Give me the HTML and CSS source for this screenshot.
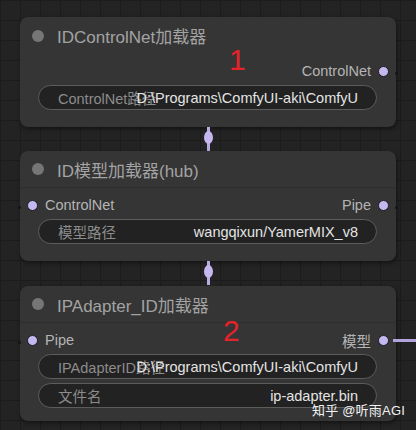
FILE: index.html
```html
<!DOCTYPE html>
<html lang="zh">
<head>
    <meta charset="UTF-8">
    <title>IPAdapter ID nodes</title>
    <link rel="stylesheet" href="styles.css">
</head>
<body>
    <div class="canvas">
        <div class="graph">
            <!-- node 1 -->
            <div class="node">
                <div class="node-title"><span class="node-dot"></span>IDControlNet加载器</div>
                <div class="node-body">
                    <div class="slot-row">
                        <span></span>
                        <span class="slot out">ControlNet<i class="pin"></i></span>
                    </div>
                    <div class="widget">
                        <span class="w-label">ControlNet路径</span>
                        <span class="w-value">D:\Programs\ComfyUI-aki\ComfyU</span>
                    </div>
                </div>
            </div>

            <div class="link"><i class="link-dot"></i></div>

            <!-- node 2 -->
            <div class="node">
                <div class="node-title sep"><span class="node-dot"></span>ID模型加载器(hub)</div>
                <div class="node-body">
                    <div class="slot-row">
                        <span class="slot in"><i class="pin"></i>ControlNet</span>
                        <span class="slot out">Pipe<i class="pin"></i></span>
                    </div>
                    <div class="widget">
                        <span class="w-label">模型路径</span>
                        <span class="w-value">wangqixun/YamerMIX_v8</span>
                    </div>
                </div>
            </div>

            <div class="link"><i class="link-dot"></i></div>

            <!-- node 3 -->
            <div class="node last">
                <div class="node-title sep"><span class="node-dot"></span>IPAdapter_ID加载器</div>
                <div class="node-body">
                    <div class="slot-row">
                        <span class="slot in"><i class="pin"></i>Pipe</span>
                        <span class="slot out linked">模型<i class="pin"></i></span>
                    </div>
                    <div class="widget">
                        <span class="w-label">IPAdapterID路径</span>
                        <span class="w-value">D:\Programs\ComfyUI-aki\ComfyU</span>
                    </div>
                    <div class="widget">
                        <span class="w-label">文件名</span>
                        <span class="w-value">ip-adapter.bin</span>
                    </div>
                </div>
            </div>
        </div>

        <div class="tag tag-1">1</div>
        <div class="tag tag-2">2</div>
        <div class="watermark">知乎 @听雨AGI</div>
    </div>
</body>
</html>
```

FILE: styles.css
```css
body {
    margin: 0;
    background: #222;
    font-family: "Liberation Sans", "Noto Sans CJK SC", sans-serif;
}
.canvas {
    position: relative;
    width: 416px;
    height: 430px;
    overflow: hidden;
    background-color: #232323;
    background-image:
        linear-gradient(#1c1c1c 1px, transparent 1px),
        linear-gradient(90deg, #1c1c1c 1px, transparent 1px);
    background-size: 20px 20px;
}
.graph {
    display: flex;
    flex-direction: column;
    width: 376px;
    padding: 17px 0 0 20px;
}
.node {
    position: relative;
    background: #353535;
    border-radius: 8px;
    box-shadow: 1px 2px 4px rgba(0,0,0,0.45);
    padding-bottom: 17px;
}
.node.last {
    padding-bottom: 13px;
}
.node-title {
    display: flex;
    align-items: center;
    gap: 13px;
    height: 37px;
    padding-left: 12px;
    color: #a3a3a3;
    font-size: 17px;
}
.node-title.sep {
    border-bottom: 1px solid #2e2e2e;
    height: 36px;
}
.node-dot {
    width: 12px;
    height: 12px;
    border-radius: 50%;
    background: #767676;
}
.node-body {
    display: flex;
    flex-direction: column;
    gap: 4px;
    padding-top: 7px;
}
.slot-row {
    display: flex;
    justify-content: space-between;
    align-items: center;
    height: 20px;
    padding: 0 7px;
}
.slot {
    position: relative;
    display: flex;
    align-items: center;
    gap: 7px;
    color: #b4b4b4;
    font-size: 14.5px;
}
.pin {
    width: 9px;
    height: 9px;
    border-radius: 50%;
    background: #c4b8ef;
    border: 1px solid #1b1b24;
}
/* tiny dark dot on the node edge */
.slot.out::after,
.slot.in::before {
    content: "";
    position: absolute;
    top: 9px;
    width: 3px;
    height: 3px;
    border-radius: 50%;
    background: #14141a;
}
.slot.out::after { right: -9px; }
.slot.in::before { left: -9px; }
.slot.linked::after {
    width: 24px;
    height: 3px;
    right: -28px;
    border-radius: 0;
    background: #b2a3dd;
}
.widget {
    display: grid;
    align-items: center;
    height: 23px;
    margin: 0 19px 0 18px;
    padding: 0 18px 0 19px;
    background: #222;
    border: 1px solid #5c5c5c;
    border-radius: 13px;
    font-size: 14.5px;
    white-space: nowrap;
    overflow: hidden;
}
.w-label,
.w-value {
    grid-area: 1 / 1;
}
.w-label {
    color: #8c8c8c;
    justify-self: start;
}
.w-value {
    color: #e4e4e4;
    justify-self: end;
}
.link {
    position: relative;
    height: 24px;
    width: 3px;
    margin-left: 187px;
    background: #b9aae4;
}
.link + .node.last {
    margin-top: 1px;
}
.link-dot {
    position: absolute;
    left: -3px;
    top: 4px;
    width: 9px;
    height: 13px;
    border-radius: 50%;
    background: #c5b6f0;
}
.tag {
    position: absolute;
    color: #e4232a;
    font-size: 30px;
    line-height: 1;
}
.tag-1 {
    left: 229px;
    top: 45px;
}
.tag-2 {
    left: 223px;
    top: 316px;
}
.watermark {
    position: absolute;
    left: 312px;
    top: 400px;
    color: #f2f2f2;
    font-size: 13px;
    letter-spacing: 0.2px;
}
```
